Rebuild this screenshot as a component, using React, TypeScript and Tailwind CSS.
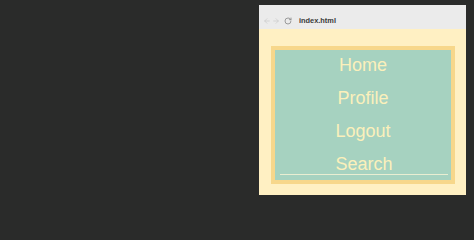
import React from "react";
import { ArrowLeft, ArrowRight, RotateCw } from "lucide-react";

const links = ["Home", "Profile", "Logout"];

export default function App() {
  return (
    <div className="w-full min-h-screen h-[202px] bg-[#2a2b2a] pl-[259px] pt-[5px] overflow-hidden">
      <div className="w-[207px] h-[190px] flex flex-col bg-[#fff0c3]">
        {/* browser chrome */}
        <div className="h-[24px] bg-[#ebebeb] flex items-center pl-[4px] pt-[8px]">
          <ArrowLeft className="w-[8px] h-[8px] text-[#c9c9c9]" strokeWidth={2} />
          <ArrowRight className="w-[8px] h-[8px] text-[#c9c9c9] ml-[1px]" strokeWidth={2} />
          <RotateCw className="w-[8px] h-[8px] text-[#8a8a8a] ml-[4px]" strokeWidth={2.5} />
          <span
            className="ml-[7px] text-[7.4px] font-bold text-[#3a3a3a]"
            style={{ fontFamily: '"Liberation Sans", Arial, sans-serif' }}
          >
            index.html
          </span>
        </div>
        {/* page */}
        <div className="flex-1 pt-[17px] pl-[12px] pr-[11px]">
          <nav
            className="border-4 border-[#f7d78b] bg-[#a6d2c0] flex flex-col items-stretch pb-[5px] text-[18px] text-[#fbf0bb] text-center"
            style={{ fontFamily: '"Liberation Sans", Arial, sans-serif' }}
          >
            <div className="-mt-[1px]">
              {links.map((l) => (
                <div key={l} className="h-[33px] leading-[33px]">
                  {l}
                </div>
              ))}
              <div className="h-[27px] leading-[33px] ml-[5px] mr-[3px] border-b border-[#e9eed2]">
                Search
              </div>
            </div>
          </nav>
        </div>
      </div>
    </div>
  );
}
